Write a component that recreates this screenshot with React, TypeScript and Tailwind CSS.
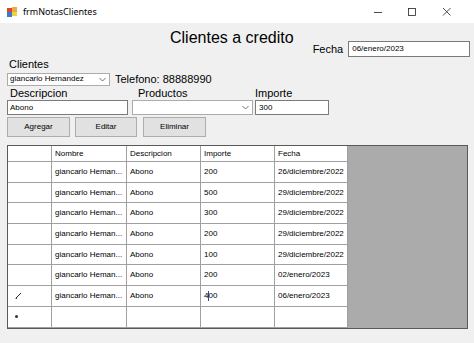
import React from "react";

const rows = [
  { nombre: "giancarlo Heman...", desc: "Abono", imp: "200", fecha: "26/diciembre/2022" },
  { nombre: "giancarlo Heman...", desc: "Abono", imp: "500", fecha: "29/diciembre/2022" },
  { nombre: "giancarlo Heman...", desc: "Abono", imp: "300", fecha: "29/diciembre/2022" },
  { nombre: "giancarlo Heman...", desc: "Abono", imp: "200", fecha: "29/diciembre/2022" },
  { nombre: "giancarlo Heman...", desc: "Abono", imp: "100", fecha: "29/diciembre/2022" },
  { nombre: "giancarlo Heman...", desc: "Abono", imp: "200", fecha: "02/enero/2023" },
  { nombre: "giancarlo Heman...", desc: "Abono", imp: "400", fecha: "06/enero/2023", editing: true },
];

const sans = { fontFamily: '"Liberation Sans", Arial, sans-serif' };

function Chevron() {
  return (
    <svg width="7" height="5" viewBox="0 0 7 5" className="shrink-0">
      <path d="M0.5 1 L3.5 4 L6.5 1" fill="none" stroke="#606060" strokeWidth="0.9" />
    </svg>
  );
}

function Cell({ w, children, last }: { w: string; children?: React.ReactNode; last?: boolean }) {
  return (
    <div className={`${w} h-full border-r border-[#a0a0a0] flex items-center pl-[3px] text-[8px] text-black whitespace-nowrap overflow-hidden ${last ? "" : ""}`}>
      {children}
    </div>
  );
}

function GridRow({ head, cells, h }: { head?: React.ReactNode; cells: React.ReactNode[]; h: string }) {
  return (
    <div className={`flex ${h} bg-white border-b border-[#a0a0a0] w-[340px]`}>
      <div className="w-[44px] h-full border-r border-[#a0a0a0] flex items-center pl-[7px]">{head}</div>
      <Cell w="w-[75px]">{cells[0]}</Cell>
      <Cell w="w-[74px]">{cells[1]}</Cell>
      <Cell w="w-[74px]">{cells[2]}</Cell>
      <Cell w="w-[73px]">{cells[3]}</Cell>
    </div>
  );
}

export default function App() {
  return (
    <div className="w-[474px] h-[343px] bg-[#f0f0f0] overflow-hidden" style={sans}>
      {/* title bar */}
      <div className="h-[23px] bg-white flex items-center">
        <svg width="11" height="10" viewBox="0 0 11 10" className="ml-[7px]">
          <rect x="0" y="1" width="5" height="4" fill="#d9472b" />
          <rect x="5" y="0" width="5" height="5" fill="#f2a93b" />
          <rect x="0" y="5" width="5" height="5" fill="#3d79c6" />
          <rect x="5" y="5" width="5" height="4" fill="#e8d24a" />
        </svg>
        <span className="ml-[5px] text-[9px] text-black" style={{ fontFamily: '"Noto Sans", sans-serif' }}>
          frmNotasClientes
        </span>
        <div className="ml-auto flex items-center">
          <svg width="34" height="16" viewBox="0 0 34 16">
            <line x1="4" y1="8.5" x2="12" y2="8.5" stroke="#222" strokeWidth="0.8" />
          </svg>
          <svg width="34" height="16" viewBox="0 0 34 16">
            <rect x="4.5" y="4.5" width="7" height="7" fill="none" stroke="#222" strokeWidth="0.8" />
          </svg>
          <svg width="34" height="16" viewBox="0 0 34 16" className="mr-[2px]">
            <path d="M5 4 L12.5 11.5 M12.5 4 L5 11.5" stroke="#222" strokeWidth="0.8" />
          </svg>
        </div>
      </div>

      {/* body */}
      <div className="flex flex-col">
        {/* header row */}
        <div className="h-[35px] flex">
          <div className="ml-[170px] mt-[7px] text-[16px] leading-none text-black">Clientes a credito</div>
          <div className="ml-[19px] mt-[21px] text-[11px] leading-none text-black">Fecha</div>
          <div className="ml-[5px] mt-[18px] w-[122px] h-[16px] bg-white border border-[#7a7a7a] flex items-center pl-[3px] text-[8px]">
            06/enero/2023
          </div>
        </div>

        <div className="h-[13px] ml-[9px] text-[11px] leading-[13px] text-black">Clientes</div>

        <div className="h-[14px] mt-px flex items-center">
          <div className="ml-[7px] w-[103px] h-[13px] bg-white border border-[#acacac] flex items-center pl-[2px] pr-[3px] text-[8px]">
            <span className="flex-1">giancarlo Hernandez</span>
            <Chevron />
          </div>
          <div className="ml-[5px] text-[11px] leading-none text-black">Telefono: 88888990</div>
        </div>

        <div className="h-[14px] flex text-[11px] leading-[14px] text-black">
          <span className="ml-[10px] w-[128px]">Descripcion</span>
          <span className="w-[117px]">Productos</span>
          <span>Importe</span>
        </div>

        <div className="h-[15px] flex">
          <div className="ml-[7px] w-[121px] h-[15px] bg-white border border-[#7a7a7a] flex items-center pl-[2px] text-[8px]">
            Abono
          </div>
          <div className="ml-[4px] w-[121px] h-[15px] bg-white border border-[#acacac] flex items-center justify-end pr-[3px]">
            <Chevron />
          </div>
          <div className="ml-[2px] w-[74px] h-[15px] bg-white border border-[#7a7a7a] flex items-center pl-[3px] text-[8px]">
            300
          </div>
        </div>

        <div className="h-[20px] mt-[2px] flex text-[8px] text-black">
          <button className="ml-[7px] w-[63px] h-full bg-[#e1e1e1] border border-[#adadad]">Agregar</button>
          <button className="ml-[5px] w-[62px] h-full bg-[#e1e1e1] border border-[#adadad]">Editar</button>
          <button className="ml-[6px] w-[63px] h-full bg-[#e1e1e1] border border-[#adadad]">Eliminar</button>
        </div>

        {/* grid */}
        <div className="ml-[7px] mt-[8px] w-[461px] h-[184px] bg-[#ababab] border border-[#5a5a5a] flex flex-col">
          <GridRow h="h-[16px]" cells={["Nombre", "Descripcion", "Importe", "Fecha"]} />
          {rows.map((r, i) => (
            <GridRow
              key={i}
              h="h-[20.7px]"
              head={
                r.editing ? (
                  <svg width="7" height="7" viewBox="0 0 7 7">
                    <path d="M1 6 L6 1" stroke="#222" strokeWidth="1" />
                    <path d="M0.5 6.5 L2 6.5" stroke="#222" strokeWidth="0.8" />
                  </svg>
                ) : null
              }
              cells={[
                r.nombre,
                r.desc,
                r.editing ? (
                  <span>
                    4
                    <span className="inline-block w-px h-[10px] bg-[#1f4fa8] align-middle -mx-[0.5px]" />
                    00
                  </span>
                ) : (
                  r.imp
                ),
                r.fecha,
              ]}
            />
          ))}
          <GridRow
            h="h-[21px]"
            head={<span className="block w-[3px] h-[3px] rounded-full bg-[#333]" />}
            cells={["", "", "", ""]}
          />
        </div>
      </div>
    </div>
  );
}
